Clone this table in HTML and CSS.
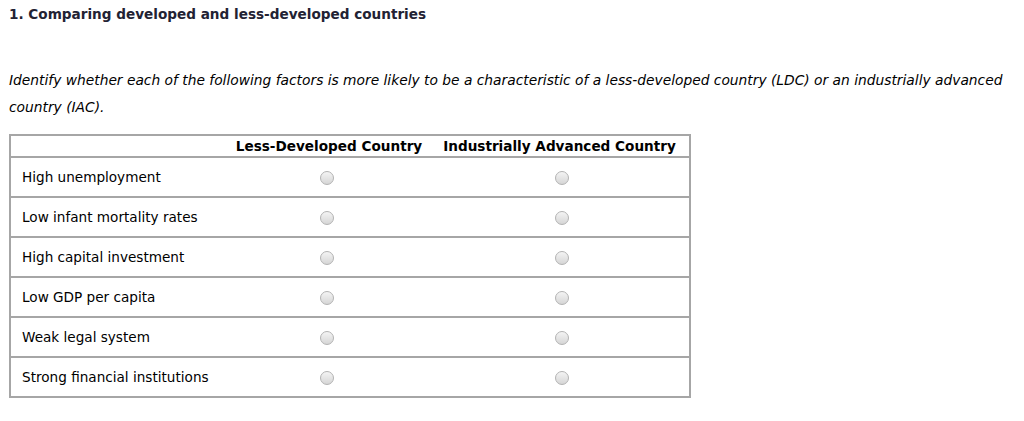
FILE: index.html
```html
<!DOCTYPE html>
<html>
<head>
<meta charset="utf-8">
<link rel="stylesheet" href="styles.css">
</head>
<body>
<div class="page">
  <h1 class="title">1. Comparing developed and less-developed countries</h1>
  <p class="intro">Identify whether each of the following factors is more likely to be a characteristic of a less-developed country (LDC) or an industrially advanced country (IAC).</p>
  <table class="grid">
    <thead>
      <tr>
        <th class="c-label"></th>
        <th class="c-opt1">Less-Developed Country</th>
        <th class="c-opt2">Industrially Advanced Country</th>
      </tr>
    </thead>
    <tbody>
      <tr><td class="label">High unemployment</td><td class="opt opt1"><input type="radio" name="r1" class="radio"></td><td class="opt opt2"><input type="radio" name="r1" class="radio"></td></tr>
      <tr><td class="label">Low infant mortality rates</td><td class="opt opt1"><input type="radio" name="r2" class="radio"></td><td class="opt opt2"><input type="radio" name="r2" class="radio"></td></tr>
      <tr><td class="label">High capital investment</td><td class="opt opt1"><input type="radio" name="r3" class="radio"></td><td class="opt opt2"><input type="radio" name="r3" class="radio"></td></tr>
      <tr><td class="label">Low GDP per capita</td><td class="opt opt1"><input type="radio" name="r4" class="radio"></td><td class="opt opt2"><input type="radio" name="r4" class="radio"></td></tr>
      <tr><td class="label">Weak legal system</td><td class="opt opt1"><input type="radio" name="r5" class="radio"></td><td class="opt opt2"><input type="radio" name="r5" class="radio"></td></tr>
      <tr><td class="label">Strong financial institutions</td><td class="opt opt1"><input type="radio" name="r6" class="radio"></td><td class="opt opt2"><input type="radio" name="r6" class="radio"></td></tr>
    </tbody>
  </table>
</div>
</body>
</html>
```
FILE: styles.css
```css
html, body {
  margin: 0;
  padding: 0;
  background: #fff;
}
body {
  font-family: "DejaVu Sans", Verdana, sans-serif;
  color: #000;
}
.page {
  padding: 6px 9px 0 9px;
}
.title {
  margin: 0;
  font-size: 13.6px;
  line-height: 16px;
  font-weight: bold;
  color: #222233;
}
.intro {
  margin: 45px 0 0 0;
  font-size: 13.8px;
  line-height: 27px;
  font-style: italic;
  color: #000;
}
.grid {
  margin-top: 13px;
  border-collapse: collapse;
  border: 2px solid #a6a6a6;
  font-size: 13.6px;
}
.grid th {
  height: 20px;
  padding: 0;
  font-weight: bold;
  text-align: center;
  vertical-align: middle;
  border-bottom: 2px solid #a6a6a6;
}
.c-label { width: 217px; }
.c-opt1 { width: 202px; }
.c-opt2 { width: 259px; }
.grid td {
  height: 38px;
  padding: 0;
  border-bottom: 2px solid #a6a6a6;
  vertical-align: middle;
}
.grid td.label {
  padding-left: 11px;
}
.grid td.opt1 {
  padding-right: 4px;
}
.grid td.opt2 {
  padding-left: 4px;
}
.radio {
  appearance: none;
  -webkit-appearance: none;
  display: block;
  width: 14px;
  height: 14px;
  margin: 1px auto 0 auto;
  border: 1px solid #b3b3b3;
  border-radius: 50%;
  background: linear-gradient(#f4f4f4, #d6d6d6);
  box-sizing: border-box;
}
```
